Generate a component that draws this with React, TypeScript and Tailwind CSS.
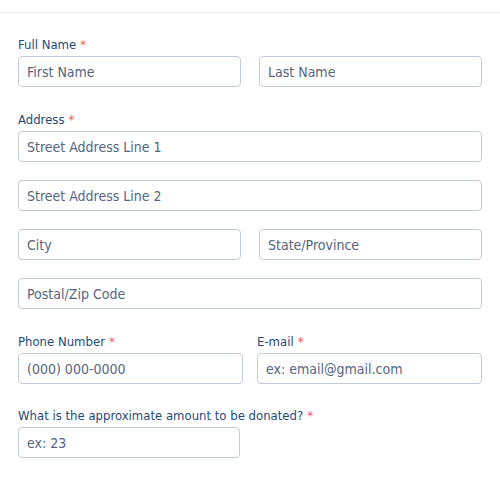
import React from 'react';

const font = { fontFamily: '"DejaVu Sans Condensed", "DejaVu Sans", Tahoma, sans-serif' };

const Label: React.FC<{ text: string; required?: boolean }> = ({ text, required }) => (
  <label className="block h-4 mb-[3px] text-[13px] leading-4 text-[#1f4a78]">
    {text}
    {required && <span className="text-[#f45a5c] ml-1">*</span>}
  </label>
);

const Input: React.FC<{ placeholder: string; className?: string }> = ({ placeholder, className = '' }) => (
  <input
    type="text"
    placeholder={placeholder}
    className={`h-[31px] px-2 text-[14px] bg-white border border-[#c3cad8] rounded-[4px] text-[#2c3345] placeholder:text-[#57647e] outline-none ${className}`}
  />
);

export default function App() {
  return (
    <div className="w-[500px] h-[484px] bg-white" style={font}>
      <div className="h-3" />
      <div className="border-t border-[#eef0f3] px-[18px] pt-6">
        <div>
          <Label text="Full Name" required />
          <div className="flex gap-[18px]">
            <Input placeholder="First Name" className="flex-1 min-w-0" />
            <Input placeholder="Last Name" className="flex-1 min-w-0" />
          </div>
        </div>

        <div className="mt-[25px]">
          <Label text="Address" required />
          <div className="flex flex-col gap-[18px]">
            <Input placeholder="Street Address Line 1" className="w-full" />
            <Input placeholder="Street Address Line 2" className="w-full" />
            <div className="flex gap-[18px]">
              <Input placeholder="City" className="flex-1 min-w-0" />
              <Input placeholder="State/Province" className="flex-1 min-w-0" />
            </div>
            <Input placeholder="Postal/Zip Code" className="w-full" />
          </div>
        </div>

        <div className="mt-[25px] flex gap-[14px]">
          <div className="flex-1 min-w-0">
            <Label text="Phone Number" required />
            <Input placeholder="(000) 000-0000" className="w-full" />
          </div>
          <div className="flex-1 min-w-0">
            <Label text="E-mail" required />
            <Input placeholder="ex: email@gmail.com" className="w-full" />
          </div>
        </div>

        <div className="mt-[24px]">
          <Label text="What is the approximate amount to be donated?" required />
          <Input placeholder="ex: 23" className="w-[222px]" />
        </div>
      </div>
    </div>
  );
}
